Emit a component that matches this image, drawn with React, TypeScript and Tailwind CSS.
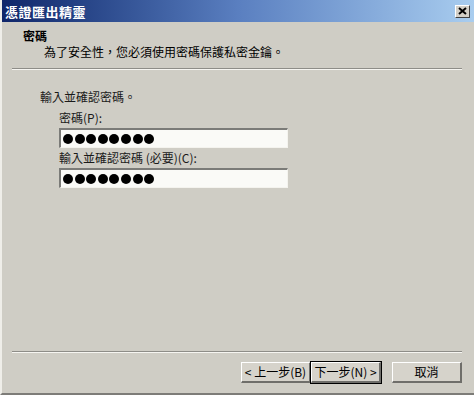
const font = { fontFamily: '"Noto Sans CJK TC", "Liberation Sans", sans-serif' };

const Dots = ({ n }: { n: number }) => (
  <div className="flex items-center gap-[1.6px] pl-[2px]">
    {Array.from({ length: n }).map((_, i) => (
      <span key={i} className="block w-[10px] h-[10px] rounded-full bg-black" />
    ))}
  </div>
);

const PwInput = ({ n }: { n: number }) => (
  <div className="w-[229px] h-[20px] border-t-2 border-l-2 border-t-[#7b7b78] border-l-[#7b7b78] border-b border-r border-b-[#f4f3ee] border-r-[#f4f3ee] bg-[#fafaf7] flex items-center">
    <Dots n={n} />
  </div>
);

const Btn = ({ children, def }: { children: React.ReactNode; def?: boolean }) => (
  <div
    className={
      'h-[21px] flex items-center justify-center text-[12px] text-black bg-[#d6d3cb] border-t border-l border-t-white border-l-white border-b-2 border-r-2 border-b-[#6f6e6a] border-r-[#6f6e6a] ' +
      (def ? 'outline outline-1 outline-black' : '')
    }
  >
    {children}
  </div>
);

export default function App() {
  return (
    <div className="w-[474px] h-[395px] bg-[#cfcdc5] flex flex-col border-l-2 border-l-[#efeee9] border-b-2 border-b-[#7d7c78] overflow-hidden" style={font}>
      <div className="h-[22px] flex items-center justify-between bg-gradient-to-r from-[#10266a] via-[#5a7fc0] to-[#a9cdef] pl-[3px] pr-[4px]">
        <span className="text-white font-bold text-[13px] leading-none tracking-[0.5px]">憑證匯出精靈</span>
        <div className="w-[15px] h-[13px] bg-[#d4d0c8] border-t border-l border-t-white border-l-white border-b border-r border-b-[#404040] border-r-[#404040] flex items-center justify-center">
          <svg width="9" height="8" viewBox="0 0 9 8">
            <path d="M1 1 L8 7 M8 1 L1 7" stroke="black" strokeWidth="2" />
          </svg>
        </div>
      </div>

      <div className="pl-[21px] pt-[6px] text-[12px] leading-[15px] text-black">
        <div className="font-bold">密碼</div>
        <div className="pl-[21px] pt-[1px]">為了安全性，您必須使用密碼保護私密金鑰。</div>
      </div>

      <div className="mt-[9px] ml-[10px] mr-[12px] border-t border-t-[#8e8d88] border-b border-b-[#f6f5f1]" />

      <div className="pl-[38px] pt-[19px] text-[12px] leading-[15px] text-[#1a1a1a]">
        <div>輸入並確認密碼。</div>
        <div className="pl-[19px] pt-[6px] flex flex-col">
          <div>密碼(P):</div>
          <div className="pt-[3px]"><PwInput n={8} /></div>
          <div className="pt-[2px]">輸入並確認密碼 (必要)(C):</div>
          <div className="pt-[3px]"><PwInput n={8} /></div>
        </div>
      </div>

      <div className="flex-1" />

      <div className="ml-[10px] mr-[12px] border-t border-t-[#8e8d88] border-b border-b-[#f6f5f1]" />

      <div className="flex justify-end pr-[12px] pt-[9px] pb-[10px]">
        <div className="w-[70px]"><Btn>&lt; 上一步(B)</Btn></div>
        <div className="w-[70px]"><Btn def>下一步(N) &gt;</Btn></div>
        <div className="w-[70px] ml-[11px]"><Btn>取消</Btn></div>
      </div>
    </div>
  );
}
